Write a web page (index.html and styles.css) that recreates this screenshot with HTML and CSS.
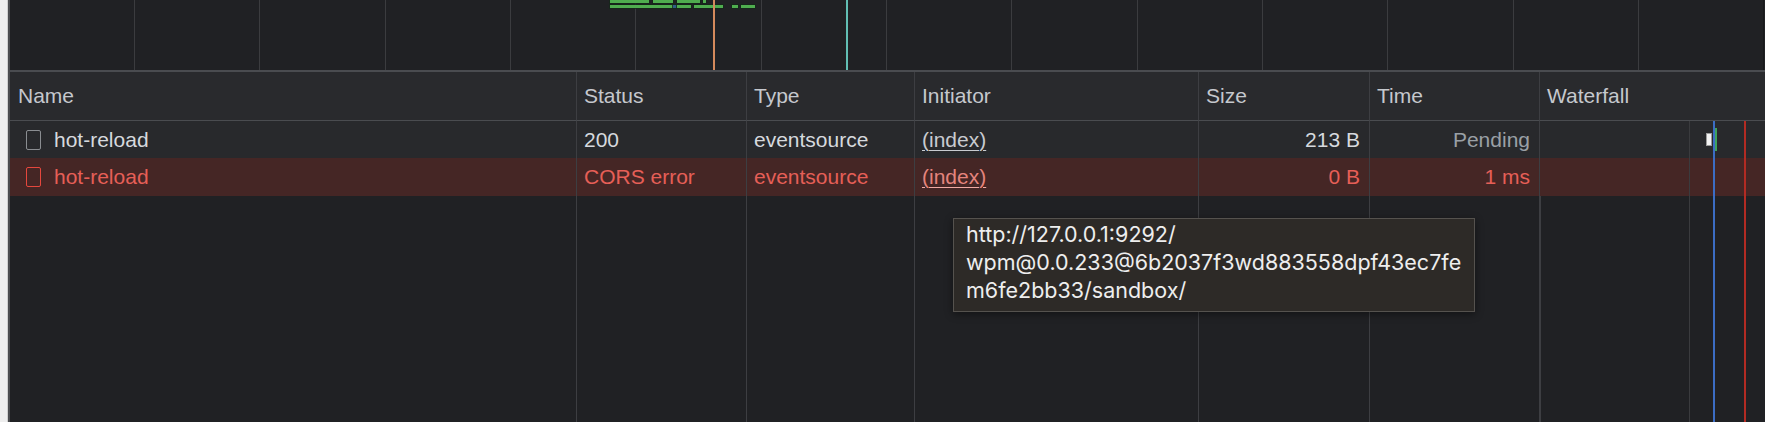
FILE: index.html
```html
<!DOCTYPE html>
<html>
<head>
<meta charset="utf-8">
<link rel="stylesheet" href="styles.css">
</head>
<body>
<div class="app">
  <div class="gutter"></div>
  <div class="panel">
    <div class="overview">
      <div class="gl" style="left:124px"></div>
      <div class="gl" style="left:249px"></div>
      <div class="gl" style="left:375px"></div>
      <div class="gl" style="left:500px"></div>
      <div class="gl" style="left:625px"></div>
      <div class="gl" style="left:751px"></div>
      <div class="gl" style="left:876px"></div>
      <div class="gl" style="left:1001px"></div>
      <div class="gl" style="left:1127px"></div>
      <div class="gl" style="left:1252px"></div>
      <div class="gl" style="left:1377px"></div>
      <div class="gl" style="left:1503px"></div>
      <div class="gl" style="left:1628px"></div>
      <div class="edge"></div>
      <div class="bar" style="left:600px;top:0;width:39px;height:3px"></div>
      <div class="bar" style="left:643px;top:0;width:20px;height:3px"></div>
      <div class="bar" style="left:667px;top:0;width:23px;height:3px"></div>
      <div class="bar" style="left:693px;top:0;width:3px;height:3px"></div>
      <div class="bar" style="left:600px;top:5px;width:63px;height:3px"></div>
      <div class="bar blue" style="left:663px;top:5px;width:4px;height:3px"></div>
      <div class="bar" style="left:667px;top:5px;width:14px;height:3px"></div>
      <div class="bar" style="left:684px;top:5px;width:29px;height:3px"></div>
      <div class="bar" style="left:722px;top:5px;width:6px;height:3px"></div>
      <div class="bar" style="left:731px;top:5px;width:14px;height:3px"></div>
      <div class="mark orange" style="left:703px"></div>
      <div class="mark teal" style="left:836px"></div>
    </div>
    <div class="table">
      <div class="cell head first">Name</div>
      <div class="cell head">Status</div>
      <div class="cell head">Type</div>
      <div class="cell head">Initiator</div>
      <div class="cell head">Size</div>
      <div class="cell head">Time</div>
      <div class="cell head">Waterfall</div>

      <div class="cell r1 first name"><span class="file"></span>hot-reload</div>
      <div class="cell r1">200</div>
      <div class="cell r1">eventsource</div>
      <div class="cell r1"><span class="link">(index)</span></div>
      <div class="cell r1 right">213 B</div>
      <div class="cell r1 right dim">Pending</div>
      <div class="cell r1"></div>

      <div class="cell r2 first name"><span class="file err"></span>hot-reload</div>
      <div class="cell r2">CORS error</div>
      <div class="cell r2">eventsource</div>
      <div class="cell r2"><span class="link">(index)</span></div>
      <div class="cell r2 right">0 B</div>
      <div class="cell r2 right">1 ms</div>
      <div class="cell r2"></div>

      <div class="cell fill first"></div>
      <div class="cell fill"></div>
      <div class="cell fill"></div>
      <div class="cell fill"></div>
      <div class="cell fill"></div>
      <div class="cell fill"></div>
      <div class="cell fill wfcol"></div>

      <div class="wf">
        <div class="wline gray"></div>
        <div class="wline blueline"></div>
        <div class="wline redline"></div>
        <div class="wbox"></div>
        <div class="wgreen"></div>
      </div>
    </div>
  </div>
</div>
<div class="tooltip">http://127.0.0.1:9292/<br>wpm@0.0.233@6b2037f3wd883558dpf43ec7fe<br>m6fe2bb33/sandbox/</div>
</body>
</html>
```

FILE: styles.css
```css
html, body {
  margin: 0;
  padding: 0;
  background: #202124;
  overflow: hidden;
}
.app {
  display: flex;
  height: 422px;
  width: 1765px;
  font-family: "Liberation Sans", Arial, sans-serif;
  font-size: 21px;
}
.gutter {
  width: 7px;
  background: #eeeeee;
  border-right: 1px solid #cfcfcf;
  flex: none;
}
.panel {
  flex: 1;
  display: flex;
  flex-direction: column;
  border-left: 2px solid #4b4c4f;
  min-width: 0;
}
.overview {
  position: relative;
  height: 70px;
  background: #202124;
  border-bottom: 2px solid #4a4c50;
  overflow: hidden;
  flex: none;
}
.gl {
  position: absolute;
  top: 0;
  bottom: 0;
  width: 1px;
  background: #3b3c3f;
}
.edge {
  position: absolute;
  top: 0;
  bottom: 0;
  right: 1px;
  width: 1px;
  background: #18191b;
}
.bar {
  position: absolute;
  background: #4fad4f;
  box-shadow: 0 0 0 1px rgba(20, 40, 25, 0.8);
}
.bar.blue {
  background: #2f5e86;
}
.mark {
  position: absolute;
  top: 0;
  bottom: 0;
  width: 2px;
}
.mark.orange { background: #d48a5c; }
.mark.teal { background: #62bfb4; }

.table {
  flex: 1;
  display: grid;
  grid-template-columns: 566px 170px 168px 284px 171px 170px 1fr;
  grid-template-rows: 49px 37px 38px 1fr;
  position: relative;
}
.cell {
  border-left: 1px solid #3d3e42;
  padding: 0 8px 0 7px;
  display: flex;
  align-items: center;
  white-space: nowrap;
  color: #d6d9de;
}
.cell.first {
  border-left: none;
  padding-left: 8px;
}
.head {
  background: #292a2d;
  color: #c5c8cd;
  border-bottom: 1px solid #4a4c50;
}
.r1 {
  background: #28292c;
}
.r2 {
  background: #452625;
  color: #e65f57;
}
.fill {
  background: #202124;
}
.fill.wfcol {
  border-left: 2px solid #3d3e42;
}
.right {
  justify-content: flex-end;
  padding-right: 9px;
}
.dim {
  color: #9aa0a6;
}
.cell.name {
  padding-left: 16px;
}
.file {
  width: 13px;
  height: 18px;
  border: 1.5px solid #8a8d91;
  border-radius: 2px;
  margin-right: 13px;
  flex: none;
}
.file.err {
  border-color: #e5473d;
}
.link {
  text-decoration: underline;
  text-decoration-thickness: 1px;
  text-underline-offset: 3px;
  color: #c8cbd0;
}
.r2 .link {
  color: #e4847d;
  text-decoration-color: #f0aaa4;
}
.wf {
  position: absolute;
  grid-column: 7;
  grid-row: 2 / 5;
  top: 0;
  bottom: 0;
  left: 0;
  right: 0;
  pointer-events: none;
}
.wline {
  position: absolute;
  top: 0;
  bottom: 0;
}
.wline.gray {
  left: 150px;
  width: 1px;
  background: #3a3b3e;
}
.wline.blueline {
  left: 174px;
  width: 2px;
  background: #3c6dc4;
}
.wline.redline {
  left: 205px;
  width: 2px;
  background: #b22b23;
}
.wbox {
  position: absolute;
  left: 167px;
  top: 12px;
  width: 4px;
  height: 11px;
  background: #f2f2f2;
  border: 1px solid #9c9c9c;
}
.wgreen {
  position: absolute;
  left: 176px;
  top: 7px;
  width: 2px;
  height: 23px;
  background: #3ea35c;
}
.tooltip {
  position: absolute;
  left: 953px;
  top: 218px;
  width: 498px;
  padding: 1px 10px 0 12px;
  height: 91px;
  box-sizing: content-box;
  background: #2d2a27;
  border: 1px solid #55524e;
  box-shadow: 0 2px 8px rgba(0, 0, 0, 0.45);
  color: #eeeeee;
  font-family: Inter, "Liberation Sans", sans-serif;
  font-size: 21.5px;
  line-height: 28px;
  white-space: nowrap;
}
```
